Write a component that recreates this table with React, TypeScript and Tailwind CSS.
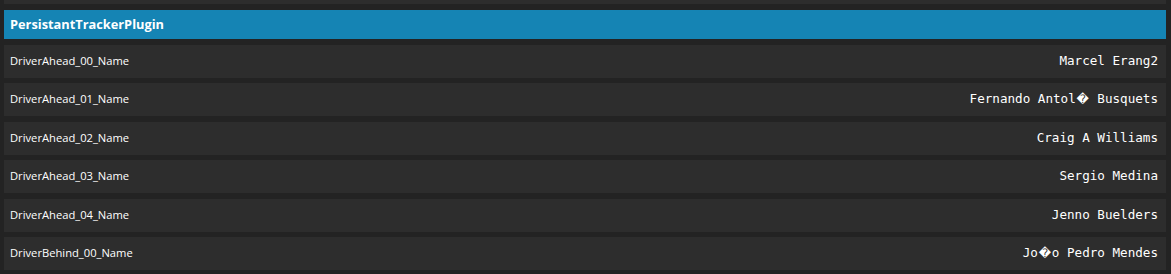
const rows: [string, string[]][] = [
  ["DriverAhead_00_Name", ["Marcel Erang2"]],
  ["DriverAhead_01_Name", ["Fernando Antol", " Busquets"]],
  ["DriverAhead_02_Name", ["Craig A Williams"]],
  ["DriverAhead_03_Name", ["Sergio Medina"]],
  ["DriverAhead_04_Name", ["Jenno Buelders"]],
  ["DriverBehind_00_Name", ["Jo", "o Pedro Mendes"]],
];

// names came through with a broken character, shown as the replacement glyph
function Value({ parts }: { parts: string[] }) {
  return (
    <span className="whitespace-pre font-['DejaVu_Sans_Mono',monospace] text-[12.6px]">
      {parts.map((p, i) => (
        <span key={i}>
          {i > 0 && (
            <span className="inline-block w-[14px] text-center font-['DejaVu_Sans',sans-serif] text-[12px]">
              {"\uFFFD"}
            </span>
          )}
          {p}
        </span>
      ))}
    </span>
  );
}

export default function App() {
  return (
    <div className="h-[274px] w-[1171px] overflow-hidden bg-[#232323] pl-[4px] pr-[5px] font-['Open_Sans',sans-serif]">
      <div className="flex flex-col gap-[5.5px]">
        <div className="-mt-[29px] h-[33px] bg-[#2d2d2d]" />
        <div className="flex h-[29.5px] items-center bg-[#1584b4] px-[6px] text-[12.8px] font-bold text-white">
          PersistantTrackerPlugin
        </div>
        {rows.map(([label, value]) => (
          <div
            key={label}
            className="flex h-[33px] items-center justify-between bg-[#2d2d2d] pl-[6px] pr-[8px] text-white"
          >
            <span className="text-[11.2px]">{label}</span>
            <Value parts={value} />
          </div>
        ))}
      </div>
    </div>
  );
}
